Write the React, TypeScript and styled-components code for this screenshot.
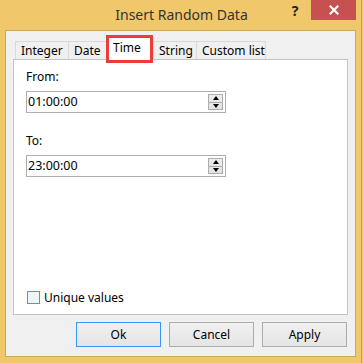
import React from 'react'
import styled, { createGlobalStyle } from 'styled-components'

const GlobalStyle = createGlobalStyle`
  html, body {
    margin: 0;
    padding: 0;
  }
  body {
    font-family: "Noto Sans", "Open Sans", sans-serif;
    font-size: 12px;
    color: #000;
  }
  * {
    box-sizing: border-box;
  }
`

const tabs = [
  { label: 'Integer', w: 54 },
  { label: 'Date', w: 40 },
  { label: 'Time', w: 47 },
  { label: 'String', w: 44 },
  { label: 'Custom list', w: 70 },
]

function SpinField({ value }: { value: string }) {
  return (
    <s.Field>
      <s.FieldText>{value}</s.FieldText>
      <s.Spin>
        <s.SpinHalf>
          <s.ArrowUp />
        </s.SpinHalf>
        <s.SpinHalf>
          <s.ArrowDown />
        </s.SpinHalf>
      </s.Spin>
    </s.Field>
  )
}

export default function App() {
  return (
    <>
      <GlobalStyle />
      <s.Window>
        <s.TitleBar>
          <s.Title>Insert Random Data</s.Title>
          <s.Controls>
            <s.Help>?</s.Help>
            <s.Close>
              <svg width="10" height="10" viewBox="0 0 10 10">
                <path d="M1.5 1.5 L8.5 8.5 M8.5 1.5 L1.5 8.5" stroke="#fff" strokeWidth="2.2" strokeLinecap="square" />
              </svg>
            </s.Close>
          </s.Controls>
        </s.TitleBar>

        <s.Client>
          <s.TabStrip>
            {tabs.map((t) => (
              <s.Tab key={t.label} $w={t.w} $active={t.label === 'Time'}>
                {t.label}
              </s.Tab>
            ))}
          </s.TabStrip>

          <s.Panel>
            <s.Label>From:</s.Label>
            <SpinField value="01:00:00" />
            <s.Label $gap>To:</s.Label>
            <SpinField value="23:00:00" />
            <s.Spacer />
            <s.CheckRow>
              <s.Box />
              <span>Unique values</span>
            </s.CheckRow>
          </s.Panel>

          <s.Buttons>
            <s.Button $default>Ok</s.Button>
            <s.Button>Cancel</s.Button>
            <s.Button>Apply</s.Button>
          </s.Buttons>
        </s.Client>
      </s.Window>
    </>
  )
}

const s = {
  Window: styled.div`
    width: 363px;
    height: 363px;
    background: #f0c86b;
    display: flex;
    flex-direction: column;
    box-shadow: inset -1px 0 0 #f0c86b, inset -2px 0 0 #c9a24f;
  `,

  TitleBar: styled.div`
    height: 30px;
    display: grid;
    grid-template-columns: 1fr auto 1fr;
    align-items: start;
  `,

  Title: styled.div`
    grid-column: 2;
    line-height: 30px;
    font-size: 14px;
    color: #333;
    white-space: nowrap;
  `,

  Controls: styled.div`
    grid-column: 3;
    justify-self: end;
    display: flex;
    align-items: flex-start;
  `,

  Help: styled.div`
    width: 20px;
    height: 22px;
    margin-right: 6px;
    text-align: center;
    line-height: 22px;
    font-size: 14px;
    font-weight: bold;
    color: #222;
  `,

  Close: styled.div`
    width: 45px;
    height: 20px;
    margin-right: 7px;
    background: #c75050;
    display: flex;
    align-items: center;
    justify-content: center;
  `,

  Client: styled.div`
    flex: 1;
    margin: 0 7px 6px 5px;
    border: 1px solid #cfa95a;
    background: #f0f0f0;
    display: flex;
    flex-direction: column;
    padding: 6px 7px 9px 7px;
  `,

  TabStrip: styled.div`
    height: 22px;
    display: flex;
    align-items: flex-end;
    padding-left: 2px;
  `,

  Tab: styled.div<{ $w: number; $active?: boolean }>`
    position: relative;
    width: ${(p) => p.$w}px;
    height: ${(p) => (p.$active ? 23 : 18)}px;
    margin-bottom: ${(p) => (p.$active ? -1 : 0)}px;
    z-index: ${(p) => (p.$active ? 1 : 0)};
    border: 1px solid #d9d9d9;
    border-bottom: none;
    background: ${(p) => (p.$active ? '#fff' : '#f0f0f0')};
    padding-left: 5px;
    display: flex;
    align-items: center;
    white-space: nowrap;
    font-size: 12px;
    padding-bottom: ${(p) => (p.$active ? 3 : 0)}px;

    & + & {
      margin-left: -1px;
    }

    ${(p) =>
      p.$active &&
      `
      &::after {
        content: '';
        position: absolute;
        top: -3px;
        left: -2px;
        right: 0;
        bottom: -3px;
        border: 3px solid #ee3b3b;
      }
    `}
  `,

  Panel: styled.div`
    flex: 1;
    background: #fff;
    border: 1px solid #c4c4c4;
    display: flex;
    flex-direction: column;
    padding: 9px 0 10px 12px;
  `,

  Label: styled.div<{ $gap?: boolean }>`
    line-height: 16px;
    font-size: 12px;
    margin-top: ${(p) => (p.$gap ? 20 : 0)}px;
    margin-bottom: 6px;
  `,

  Field: styled.div`
    width: 200px;
    height: 22px;
    border: 1px solid #abadb3;
    display: flex;
    align-items: center;
    padding: 0 2px 0 1px;
  `,

  FieldText: styled.div`
    flex: 1;
    font-size: 12.5px;
    line-height: 20px;
  `,

  Spin: styled.div`
    width: 15px;
    height: 16px;
    border: 1px solid #adadad;
    background: linear-gradient(#ececec, #e2e2e2);
    display: flex;
    flex-direction: column;
  `,

  SpinHalf: styled.div`
    flex: 1;
    display: flex;
    align-items: center;
    justify-content: center;

    &:first-child {
      border-bottom: 1px solid #adadad;
    }
  `,

  ArrowUp: styled.div`
    width: 0;
    height: 0;
    border-left: 3.5px solid transparent;
    border-right: 3.5px solid transparent;
    border-bottom: 4px solid #000;
  `,

  ArrowDown: styled.div`
    width: 0;
    height: 0;
    border-left: 3.5px solid transparent;
    border-right: 3.5px solid transparent;
    border-top: 4px solid #000;
  `,

  Spacer: styled.div`
    flex: 1;
  `,

  CheckRow: styled.div`
    display: flex;
    align-items: center;
    gap: 4px;
    margin-left: 1px;
    font-size: 12px;
    line-height: 13px;
  `,

  Box: styled.div`
    width: 13px;
    height: 13px;
    border: 1px solid #4a98e6;
    background: #eef5fd;
  `,

  Buttons: styled.div`
    display: flex;
    justify-content: flex-end;
    gap: 8px;
    margin-top: 7px;
    padding-right: 1px;
  `,

  Button: styled.div<{ $default?: boolean }>`
    width: 85px;
    height: 25px;
    border: 1px solid ${(p) => (p.$default ? '#3399ff' : '#acacac')};
    background: linear-gradient(#f0f0f0, #e5e5e5);
    display: flex;
    align-items: center;
    justify-content: center;
    font-size: 12px;
  `,
}
